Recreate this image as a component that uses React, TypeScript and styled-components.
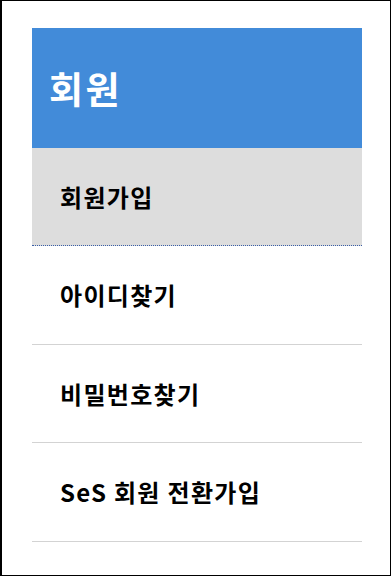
import React from "react";
import styled, { createGlobalStyle } from "styled-components";

const GlobalStyle = createGlobalStyle`
  html, body {
    margin: 0;
    padding: 0;
    background: #fff;
  }
  body {
    font-family: "Noto Sans CJK KR", "Noto Sans", sans-serif;
  }
`;

const Frame = styled.div`
  box-sizing: border-box;
  width: 391px;
  height: 576px;
  border: 1px solid #000;
  border-left-width: 2px;
  padding: 27px 0 0 30px;
`;

const Panel = styled.nav`
  width: 330px;
`;

const Header = styled.h2`
  margin: 0;
  height: 120px;
  display: flex;
  align-items: center;
  padding-left: 17px;
  background: #428bd9;
  color: #fff;
  font-size: 37px;
  font-weight: 700;
  letter-spacing: 2.5px;
`;

const Menu = styled.ul`
  list-style: none;
  margin: 0;
  padding: 0;
`;

const Item = styled.li<{ $active?: boolean }>`
  box-sizing: border-box;
  height: ${(p) => (p.$active ? "98px" : "98.6px")};
  display: flex;
  align-items: center;
  padding-left: 28px;
  background: ${(p) => (p.$active ? "#dddddd" : "#fff")};
  border-bottom: 1px ${(p) => (p.$active ? "dotted #3a5fa8" : "solid #d3d3d3")};
  color: #000;
  font-size: 24px;
  font-weight: 700;
  letter-spacing: 1.3px;
`;

const items = ["회원가입", "아이디찾기", "비밀번호찾기", "SeS 회원 전환가입"];

export default function App() {
  return (
    <>
      <GlobalStyle />
      <Frame>
        <Panel>
          <Header>회원</Header>
          <Menu>
            {items.map((label, i) => (
              <Item key={label} $active={i === 0}>
                {label}
              </Item>
            ))}
          </Menu>
        </Panel>
      </Frame>
    </>
  );
}
